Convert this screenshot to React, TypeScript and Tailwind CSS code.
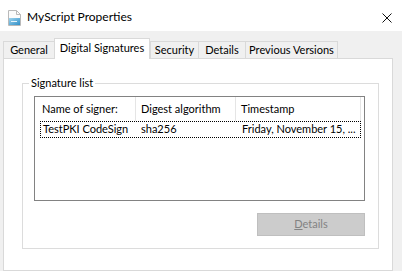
const FONT = { fontFamily: 'Lato, "Liberation Sans", Arial, sans-serif' }

const TABS = [
  { label: 'General', w: 'w-[51px]' },
  { label: 'Digital Signatures', w: 'w-[96px]', active: true },
  { label: 'Security', w: 'w-[48px]' },
  { label: 'Details', w: 'w-[47px]' },
  { label: 'Previous Versions', w: 'w-[93px]', last: true },
]

function FileIcon() {
  return (
    <svg width="15" height="16" viewBox="0 0 15 16">
      <defs>
        <linearGradient id="blu" x1="0" y1="0" x2="1" y2="1">
          <stop offset="0" stopColor="#9fd4ee" />
          <stop offset="1" stopColor="#2f8fc8" />
        </linearGradient>
      </defs>
      <path d="M1.5 0.5h8l4 4v11h-12z" fill="#fbfbfb" stroke="#b9b9b9" />
      <path d="M9.5 0.5v4h4" fill="none" stroke="#b9b9b9" />
      <rect x="2" y="8" width="11" height="7" fill="url(#blu)" />
      <path d="M4 11.5h6" stroke="#e6f4fb" strokeWidth="1" />
    </svg>
  )
}

export default function App() {
  return (
    <div className="w-[402px] h-[271px] bg-[#f0f0f0] overflow-hidden flex flex-col text-[11px] text-black whitespace-nowrap" style={FONT}>
      {/* title bar */}
      <div className="h-[31px] bg-white flex items-center shrink-0">
        <div className="ml-[7px] mt-[4px]">
          <FileIcon />
        </div>
        <span className="ml-[5px] mt-[2px] text-[12px]">MyScript Properties</span>
        <svg className="ml-auto mr-[10px] mt-[4px]" width="10" height="10" viewBox="0 0 10 10">
          <path d="M0.5 0.5l9 9M9.5 0.5l-9 9" stroke="#111" strokeWidth="1" />
        </svg>
      </div>

      {/* tabs */}
      <div className="h-[27px] flex items-end pl-[3px] shrink-0">
        {TABS.map((t) =>
          t.active ? (
            <div
              key={t.label}
              className={`${t.w} h-[21px] -mb-px relative z-10 bg-white border border-b-0 border-[#d9d9d9] flex items-center justify-center pb-[1px]`}
            >
              {t.label}
            </div>
          ) : (
            <div
              key={t.label}
              className={`${t.w} h-[17px] border-t border-l border-[#d9d9d9] ${t.last ? 'border-r' : ''} flex items-center justify-center`}
            >
              {t.label}
            </div>
          )
        )}
      </div>

      {/* panel */}
      <div className="ml-[3px] w-[390px] flex-1 bg-white border border-[#d9d9d9] pl-[18px] pt-[17px]">
        <fieldset className="w-[357px] h-[173px] border border-[#dcdcdc] pl-[11px] pr-[13px] pt-[6px] min-w-0">
          <legend className="-ml-[5px] px-[2px] leading-[14px]">Signature list</legend>

          <div className="h-[105px] border border-[#828282] bg-white">
            <div className="h-[24px] flex">
              <div className="w-[101px] h-full border-r border-[#e5e5e5] pl-[7px] flex items-center">Name of signer:</div>
              <div className="w-[100px] h-full border-r border-[#e5e5e5] pl-[5px] flex items-center">Digest algorithm</div>
              <div className="w-[125px] h-full border-r border-[#e5e5e5] pl-[5px] flex items-center">Timestamp</div>
            </div>
            <div className="ml-[5px] w-[321px] h-[17px] border border-dotted border-black flex items-center">
              <div className="w-[96px] pl-[2px]">TestPKI CodeSign</div>
              <div className="w-[100px] pl-[4px]">sha256</div>
              <div className="flex-1 pl-[5px]">Friday, November 15, ...</div>
            </div>
          </div>

          <div className="flex justify-end mt-[12px]">
            <div className="w-[108px] h-[23px] bg-[#cccccc] border border-[#bfbfbf] flex items-center justify-center text-[#838383]">
              <span><span className="underline">D</span>etails</span>
            </div>
          </div>
        </fieldset>
      </div>
    </div>
  )
}
